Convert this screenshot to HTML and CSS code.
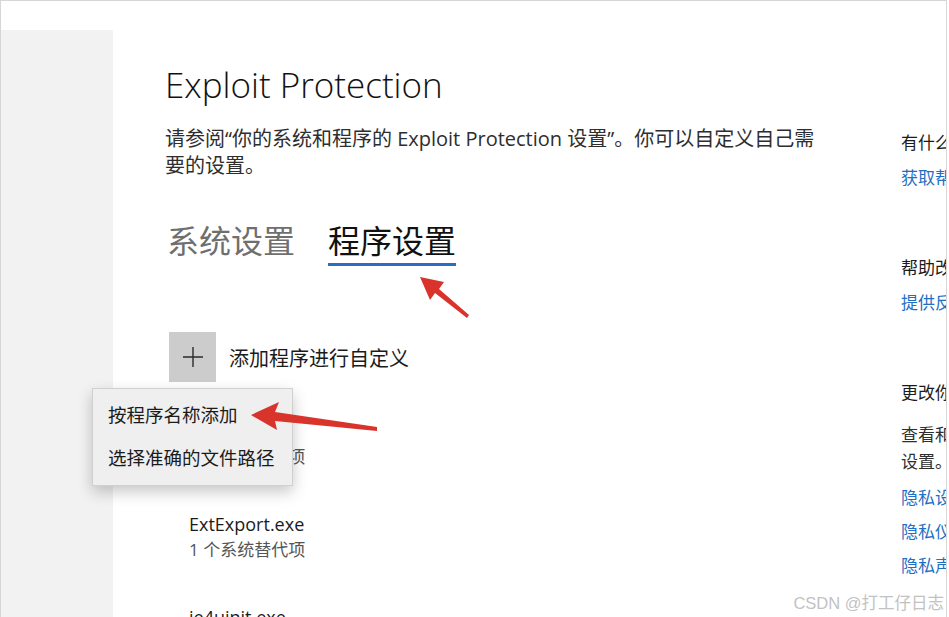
FILE: index.html
```html
<!DOCTYPE html>
<html lang="zh-CN">
<head>
<meta charset="utf-8">
<title>Exploit Protection</title>
<link rel="stylesheet" href="styles.css">
</head>
<body>
<div class="window">
  <aside class="nav"></aside>
  <main class="content">
    <h1 class="title">Exploit Protection</h1>
    <p class="desc">请参阅“你的系统和程序的 Exploit Protection 设置”。你可以自定义自己需要的设置。</p>
    <div class="tabs">
      <span class="tab">系统设置</span>
      <span class="tab active">程序设置</span>
    </div>
    <div class="add-row">
      <span class="add-btn">
        <svg width="22" height="22" viewBox="0 0 22 22"><path d="M11 1v20M1 11h20" stroke="#2b2b2b" stroke-width="1.4" fill="none"/></svg>
      </span>
      <span class="add-label">添加程序进行自定义</span>
      <div class="menu">
        <div class="menu-item">按程序名称添加</div>
        <div class="menu-item">选择准确的文件路径</div>
      </div>
    </div>
    <ul class="programs">
      <li class="program"><div class="prog-name">EXCEL.EXE</div><div class="prog-sub">1 个系统替代项</div></li>
      <li class="program"><div class="prog-name">ExtExport.exe</div><div class="prog-sub">1 个系统替代项</div></li>
      <li class="program"><div class="prog-name">ie4uinit.exe</div><div class="prog-sub">1 个系统替代项</div></li>
    </ul>
  </main>
  <aside class="side">
    <div class="side-h">有什么疑问?</div>
    <a class="side-link">获取帮助</a>
    <div class="side-h gap">帮助改进 Windows 安全中心</div>
    <a class="side-link">提供反馈</a>
    <div class="side-h gap">更改你的隐私设置</div>
    <p class="side-p">查看和更改<br>设置。</p>
    <a class="side-link">隐私设置</a>
    <a class="side-link">隐私仪表板</a>
    <a class="side-link">隐私声明</a>
  </aside>
  <svg class="annot" width="949" height="617" viewBox="0 0 949 617">
    <polygon fill="#d8342c" points="420,277 444,282 439,289 469,315 467,318 435,293 430,300"/>
    <polygon fill="#d8342c" points="251,415 279,402 275,412 377,427 377,431 275,421 277,430"/>
  </svg>
  <div class="watermark">CSDN @打工仔日志</div>
</div>
</body>
</html>
```

FILE: styles.css
```css
* { box-sizing: border-box; }
html, body { margin: 0; padding: 0; background: #fff; }
body {
  font-family: "Open Sans", "Noto Sans CJK SC", sans-serif;
  color: #1b1b1b;
}
.window {
  position: relative;
  width: 947px;
  height: 617px;
  display: flex;
  overflow: hidden;
  border: 1px solid #d6d6d6;
  border-bottom: none;
  background: #fff;
}
.nav {
  flex: none;
  width: 112px;
  margin-top: 29px;
  background: #f2f2f2;
}
.content {
  flex: none;
  width: 788px;
  padding: 63px 0 0 52px;
}
.title {
  margin: 0;
  font-size: 35px;
  font-weight: 300;
  line-height: 41px;
  color: #111;
}
.desc {
  margin: 20px 0 0;
  width: 655px;
  font-size: 20px;
  line-height: 27px;
  color: #2e2e2e;
}
.tabs {
  display: flex;
  gap: 33px;
  margin-top: 42px;
  padding-left: 2px;
}
.tab {
  font-size: 32px;
  line-height: 40px;
  padding-bottom: 2px;
  border-bottom: 3px solid transparent;
  color: #6f6f6f;
}
.tab.active {
  color: #111;
  border-bottom-color: #2d6cc0;
}
.add-row {
  position: relative;
  display: flex;
  align-items: center;
  gap: 13px;
  margin: 66px 0 0 4px;
}
.add-btn {
  width: 47px;
  height: 50px;
  background: #cccccc;
  display: flex;
  align-items: center;
  justify-content: center;
}
.add-label {
  font-size: 20px;
  color: #1b1b1b;
}
.menu {
  position: absolute;
  left: -77px;
  top: 56px;
  width: 201px;
  height: 98px;
  padding: 4px 0 0;
  background: #efefef;
  border: 1px solid #d0d0d0;
  box-shadow: 0 6px 14px rgba(0, 0, 0, 0.22);
  z-index: 2;
}
.menu-item {
  padding-left: 15px;
  font-size: 18.5px;
  line-height: 43px;
  color: #1b1b1b;
}
.programs {
  list-style: none;
  margin: 36px 0 0;
  padding: 0 0 0 24px;
}
.program {
  margin-bottom: 41px;
}
.prog-name {
  font-size: 18px;
  line-height: 26px;
  color: #1b1b1b;
}
.prog-sub {
  font-size: 17px;
  line-height: 26px;
  color: #555;
}
.side {
  flex: 1;
  min-width: 0;
  overflow: hidden;
  white-space: nowrap;
  padding-top: 128px;
}
.side-h {
  font-size: 17px;
  line-height: 27px;
  color: #1b1b1b;
  margin-bottom: 8px;
}
.side-h.gap { margin-top: 63px; }
.side-link {
  display: block;
  font-size: 17px;
  line-height: 27px;
  color: #1f6fc5;
  margin-bottom: 7px;
}
.side-p {
  margin: 15px 0 9px;
  font-size: 17px;
  line-height: 27px;
  color: #2e2e2e;
}
.annot {
  position: absolute;
  left: -1px;
  top: -1px;
  z-index: 3;
  pointer-events: none;
}
.watermark {
  position: absolute;
  right: 2px;
  top: 591px;
  white-space: nowrap;
  font-size: 16.5px;
  line-height: 22px;
  color: #c2c2c2;
  z-index: 4;
  font-family: "Liberation Sans", "Noto Sans CJK SC", sans-serif;
}
```
